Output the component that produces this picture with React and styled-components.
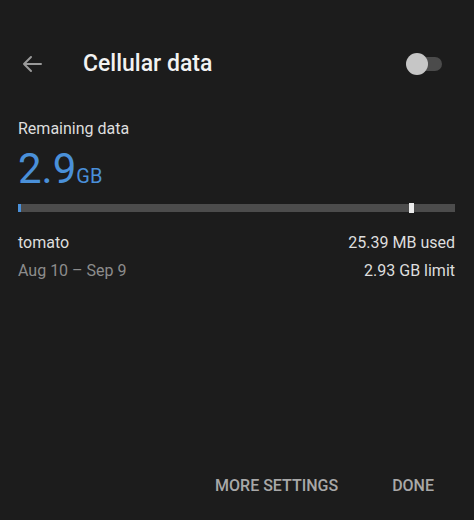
import React from 'react'
import styled, { createGlobalStyle } from 'styled-components'

const Global = createGlobalStyle`
  html, body {
    margin: 0;
    padding: 0;
    background: #1c1c1c;
  }
  body {
    font-family: Roboto, "Noto Sans", "Liberation Sans", sans-serif;
    -webkit-font-smoothing: antialiased;
  }
`

const Screen = styled.div`
  display: flex;
  flex-direction: column;
  height: 520px;
  background: #1c1c1c;
`

const Header = styled.div`
  display: flex;
  align-items: center;
  height: 48px;
  margin-top: 40px;
  padding: 0 32px 0 22px;
`

const BackButton = styled.div`
  display: flex;
  width: 20px;
  height: 20px;
  margin-right: 41px;
`

const Title = styled.h1`
  flex: 1;
  margin: 0;
  color: #f2f2f2;
  font-size: 23px;
  font-weight: 500;
  line-height: 28px;
`

const Toggle = styled.div`
  position: relative;
  width: 36px;
  height: 22px;
`

const Track = styled.div`
  position: absolute;
  left: 8px;
  top: 4px;
  width: 28px;
  height: 14px;
  border-radius: 7px;
  background: #4b4b4b;
`

const Thumb = styled.div`
  position: absolute;
  left: 0;
  top: 0;
  width: 22px;
  height: 22px;
  border-radius: 50%;
  background: #c6c6c6;
`

const Main = styled.div`
  padding: 31px 19px 0 18px;
`

const Label = styled.div`
  color: #dedede;
  font-size: 16px;
  line-height: 20px;
`

const Amount = styled.div`
  display: flex;
  align-items: baseline;
  margin-top: 9px;
  color: #4a90d9;
  line-height: 42px;
`

const Number = styled.span`
  font-size: 42px;
  font-weight: 400;
`

const Unit = styled.span`
  font-size: 20px;
`

const Bar = styled.div`
  position: relative;
  height: 8px;
  margin-top: 7px;
  background: #4c4c4c;
`

const Used = styled.div`
  position: absolute;
  left: 0;
  top: 0;
  width: 3px;
  height: 8px;
  background: #4a90d9;
`

const Marker = styled.div`
  position: absolute;
  top: -1px;
  left: ${p => p.at}%;
  width: 5px;
  height: 10px;
  background: #ececec;
`

const Row = styled.div`
  display: flex;
  justify-content: space-between;
  margin-top: ${p => p.gap}px;
  color: ${p => (p.muted ? '#8c8c8c' : '#dedede')};
  font-size: 16px;
  line-height: 20px;
`

const Value = styled.span`
  color: #dedede;
`

const Footer = styled.div`
  display: flex;
  justify-content: flex-end;
  gap: 54px;
  margin-top: auto;
  padding: 0 40px 24px 0;
`

const Button = styled.div`
  color: #a8a8a8;
  font-size: 16px;
  font-weight: 500;
  line-height: 20px;
  text-transform: uppercase;
`

const BackArrow = () => (
  <svg width="20" height="20" viewBox="0 0 20 20" fill="none">
    <path d="M19 10H2M9 3L2 10L9 17" stroke="#9a9a9a" strokeWidth="2" strokeLinecap="round" strokeLinejoin="round" />
  </svg>
)

const App = () => {
  const warningAt = 89.5

  return (
    <Screen>
      <Global />
      <Header>
        <BackButton>
          <BackArrow />
        </BackButton>
        <Title>Cellular data</Title>
        <Toggle>
          <Track />
          <Thumb />
        </Toggle>
      </Header>
      <Main>
        <Label>Remaining data</Label>
        <Amount>
          <Number>2.9</Number>
          <Unit>GB</Unit>
        </Amount>
        <Bar>
          <Used />
          <Marker at={warningAt} />
        </Bar>
        <Row gap={21}>
          <span>tomato</span>
          <span>25.39 MB used</span>
        </Row>
        <Row gap={8} muted>
          <span>Aug 10 – Sep 9</span>
          <Value>2.93 GB limit</Value>
        </Row>
      </Main>
      <Footer>
        <Button>More settings</Button>
        <Button>Done</Button>
      </Footer>
    </Screen>
  )
}

export default App
